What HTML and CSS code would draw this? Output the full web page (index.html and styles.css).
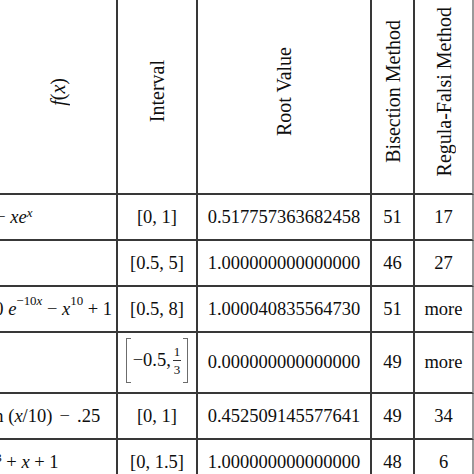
FILE: index.html
```html
<!DOCTYPE html>
<html lang="en">
<head>
<meta charset="utf-8">
<title>Root finding comparison</title>
<link rel="stylesheet" href="styles.css">
</head>
<body>
<table class="results">
  <thead>
    <tr class="head-row">
      <th class="c1"><span class="vt"><i>f</i>(<i>x</i>)</span></th>
      <th class="c2"><span class="vt">Interval</span></th>
      <th class="c3"><span class="vt">Root Value</span></th>
      <th class="c4"><span class="vt">Bisection Method</span></th>
      <th class="c5"><span class="vt">Regula-Falsi Method</span></th>
    </tr>
  </thead>
  <tbody>
    <tr class="row">
      <td class="fx"><span class="formula f1">cos <i>x</i> − <i>xe</i><sup><i>x</i></sup></span></td>
      <td>[0, 1]</td>
      <td>0.517757363682458</td>
      <td>51</td>
      <td class="last">17</td>
    </tr>
    <tr class="row">
      <td class="fx"></td>
      <td>[0.5, 5]</td>
      <td>1.000000000000000</td>
      <td>46</td>
      <td class="last">27</td>
    </tr>
    <tr class="row">
      <td class="fx"><span class="formula f3">10 <i>e</i><sup class="hi">−10<i>x</i></sup> − <i>x</i><sup class="hi">10</sup> + 1</span></td>
      <td>[0.5, 8]</td>
      <td>1.000040835564730</td>
      <td>51</td>
      <td class="last">more</td>
    </tr>
    <tr class="row tall">
      <td class="fx"></td>
      <td>
        <span class="interval">
          <span class="bracket left"></span>
          <span class="num">−0.5,</span>
          <span class="frac"><span class="top">1</span><span class="bot">3</span></span>
          <span class="bracket right"></span>
        </span>
      </td>
      <td>0.000000000000000</td>
      <td>49</td>
      <td class="last">more</td>
    </tr>
    <tr class="row">
      <td class="fx"><span class="formula f5">sin (<i>x</i>/10)<span class="wide"> − .25</span></span></td>
      <td>[0, 1]</td>
      <td>0.452509145577641</td>
      <td>49</td>
      <td class="last">34</td>
    </tr>
    <tr class="row">
      <td class="fx"><span class="formula f6"><i>x</i><sup>3</sup> + <i>x</i> + 1</span></td>
      <td>[0, 1.5]</td>
      <td>1.000000000000000</td>
      <td>48</td>
      <td class="last">6</td>
    </tr>
  </tbody>
</table>
</body>
</html>
```
FILE: styles.css
```css
html, body {
  margin: 0;
  padding: 0;
  background: #ffffff;
}
body {
  width: 474px;
  height: 474px;
  overflow: hidden;
  font-family: "Liberation Serif", "Times New Roman", serif;
  color: #0e0e0e;
}
.results {
  border-collapse: separate;
  border-spacing: 0;
  table-layout: fixed;
  width: 474px;
}
.results th,
.results td {
  box-sizing: border-box;
  padding: 0;
  border-right: 2px solid #383838;
  border-bottom: 2px solid #383838;
  text-align: center;
  vertical-align: middle;
  white-space: nowrap;
  overflow: hidden;
  font-weight: normal;
}
.results th {
  font-size: 20px;
  height: 195px;
  padding-bottom: 5px;
}
.results td {
  font-size: 18.5px;
  height: 46px;
}
.results .tall td {
  height: 61px;
}
.c1 { width: 118px; }
.c2 { width: 80px; }
.c3 { width: 174px; }
.c4 { width: 43px; }
.c5 { width: 59px; }
.results .c5,
.results .last {
  border-right-color: #9a9a9a;
}
.vt {
  display: inline-block;
  writing-mode: vertical-rl;
  transform: rotate(180deg);
  line-height: 1;
}
.results td.fx {
  text-align: left;
}
.formula {
  display: inline-block;
  white-space: nowrap;
}
.formula sup {
  font-size: 0.7em;
  line-height: 0;
  vertical-align: 0.45em;
}
.formula sup.hi {
  vertical-align: 0.75em;
}
.f1 { margin-left: -47px; }
.f3 { margin-left: -15px; }
.f5 { margin-left: -18px; }
.f5 .wide { word-spacing: 2.5px; }
.f6 { margin-left: -13px; }

.interval {
  display: inline-flex;
  align-items: center;
  gap: 2px;
}
.bracket {
  display: inline-block;
  width: 4px;
  height: 43px;
  border: 1px solid #6c6c6c;
}
.bracket.left { border-right: none; }
.bracket.right { border-left: none; }
.frac {
  display: inline-flex;
  flex-direction: column;
  align-items: center;
  font-size: 13px;
  line-height: 1;
}
.frac .top {
  padding: 0 1px 2px;
  border-bottom: 1px solid #333;
}
.frac .bot {
  padding-top: 2px;
}
```
